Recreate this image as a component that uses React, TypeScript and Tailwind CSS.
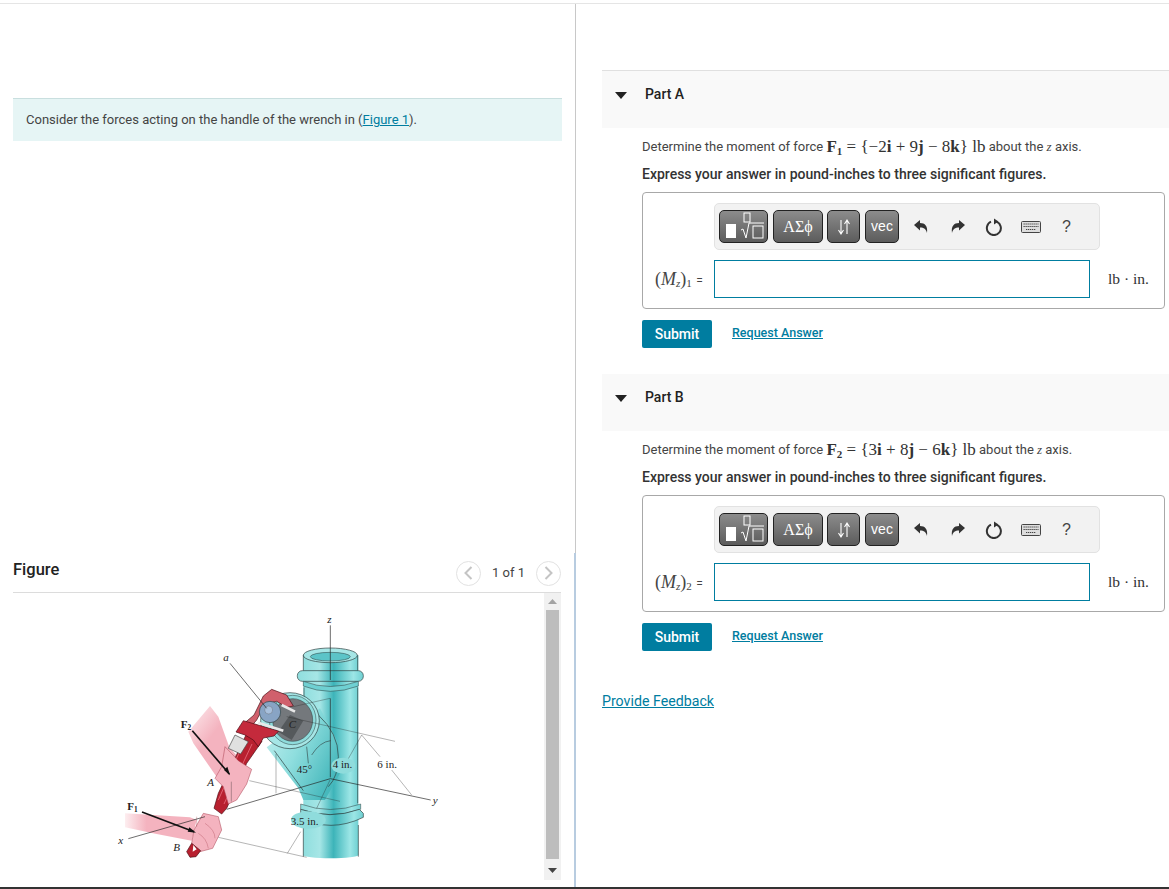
import React from 'react';

const serif = "font-['Liberation_Serif','DejaVu_Serif',serif]";

function WrenchFigure() {
  return (
    <svg width="350" height="270" viewBox="0 0 1050 810" className="block">
      <defs>
        <linearGradient id="pipe" x1="0" x2="1" y1="0" y2="0">
          <stop offset="0" stopColor="#8fdede" />
          <stop offset="0.3" stopColor="#a6e6e6" />
          <stop offset="0.55" stopColor="#3db4b9" />
          <stop offset="0.85" stopColor="#9ce6e6" />
          <stop offset="1" stopColor="#6fd0d2" />
        </linearGradient>
        <linearGradient id="branch" x1="0" x2="1" y1="0" y2="0.6">
          <stop offset="0" stopColor="#c6f0f0" />
          <stop offset="0.5" stopColor="#8fdede" />
          <stop offset="1" stopColor="#46b8bc" />
        </linearGradient>
        <linearGradient id="armTop" x1="1" x2="0" y1="1" y2="0">
          <stop offset="0.6" stopColor="#f4b3bf" />
          <stop offset="1" stopColor="#fdeef0" />
        </linearGradient>
        <linearGradient id="armLow" x1="1" x2="0" y1="0" y2="0">
          <stop offset="0.7" stopColor="#f4b3bf" />
          <stop offset="1" stopColor="#fdeef0" />
        </linearGradient>
      </defs>

      {/* main pipe */}
      <rect x="640" y="165" width="165" height="600" fill="url(#pipe)" />
      <ellipse cx="722" cy="765" rx="83" ry="10" fill="url(#pipe)" />
      <ellipse cx="721" cy="166" rx="81" ry="22" fill="#a6e6e6" stroke="#2c3c3c" strokeWidth="2" />
      <ellipse cx="721" cy="170" rx="60" ry="13" fill="#5cc4c8" stroke="#2c3c3c" strokeWidth="1.5" />
      <path d="M640 166V212M803 166V212M642 262V330M803 262V610M640 675V770M805 675V770" stroke="#2c3c3c" strokeWidth="2" fill="none" />
      <rect x="622" y="212" width="198" height="32" rx="15" fill="url(#pipe)" stroke="#2c3c3c" strokeWidth="2" />
      <path d="M640 244Q720 275 805 244V258Q720 290 640 258Z" fill="#6fd0d2" stroke="#2c3c3c" strokeWidth="1.5" />

      {/* branch */}
      <path d="M530 442L690 325L745 430L750 520L705 600L640 600L625 565Z" fill="url(#branch)" />
      <path d="M553 452L640 572M685 345Q745 400 745 470Q745 530 715 560" stroke="#2c3c3c" strokeWidth="2" fill="none" />
      <path d="M632 612Q720 645 812 612V628Q720 660 632 628Z" fill="url(#pipe)" stroke="#2c3c3c" strokeWidth="1.5" />
      <path d="M632 628V652Q720 700 820 652V640L808 628Q720 660 632 628Z" fill="url(#pipe)" stroke="#2c3c3c" strokeWidth="2" />
      <ellipse cx="600" cy="362" rx="88" ry="84" fill="#a6e6e6" stroke="#2c3c3c" strokeWidth="2" />
      <ellipse cx="608" cy="360" rx="70" ry="74" fill="#8fdcdc" stroke="#2c3c3c" strokeWidth="1.5" />
      <ellipse cx="608" cy="360" rx="60" ry="64" fill="#74787c" stroke="#2c3c3c" strokeWidth="1.5" />
      <path d="M600 345L640 362L605 420L565 395Z" fill="#55595c" />

      {/* arms */}
      <path d="M360 318L385 350L418 442L470 500L390 545L310 430L295 395Z" fill="url(#armTop)" />
      <path d="M105 640L300 652L320 660L305 722L200 702L105 682Z" fill="url(#armLow)" />

      {/* wrench */}
      <path d="M476 388L516 424L470 490L410 625L395 642L372 625L385 580Z" fill="#b8202f" stroke="#4a0c14" strokeWidth="2" />
      <path d="M462 425L385 600M486 432L402 612" stroke="#e06070" strokeWidth="3" />
      <path d="M492 345L520 288L545 268L590 285L610 318L590 322L560 304L525 312L500 360L476 388L460 372Z" fill="#d0606c" stroke="#4a0c14" strokeWidth="2" />
      <path d="M438 396L460 362L566 393L552 408L520 414L505 440L490 420L465 405Z" fill="#c42a3c" stroke="#4a0c14" strokeWidth="2" />
      <path d="M415 445L435 405L475 425L452 462Z" fill="#e0e0e0" stroke="#444" strokeWidth="2" />
      <circle cx="540" cy="336" r="32" fill="#88a4c4" stroke="#2c3c3c" strokeWidth="2" />
      <circle cx="536" cy="330" r="12" fill="#a8c0dc" stroke="#555" />
      <path d="M575 315L615 335M505 368L580 392" stroke="#e8e8e8" strokeWidth="8" />

      {/* hands */}
      <path d="M405 440L445 482L485 508L470 552L440 600L415 612L400 560L375 535L395 500Z" fill="#f4b3bf" stroke="#a84050" strokeWidth="1.5" />
      <path d="M340 640L385 650L395 690L368 745L330 755L305 730L312 690Z" fill="#f4b3bf" stroke="#a84050" strokeWidth="1.5" />
      <path d="M305 730L290 755L300 772L318 770L332 752Z" fill="#b8202f" stroke="#4a0c14" strokeWidth="2" />
      <path d="M310 735L308 755L320 748Z" fill="#fff" />
      <path d="M325 700Q350 715 355 745M345 670Q375 690 375 715M320 650V680" stroke="#a84050" fill="none" />

      {/* axes and dimensions */}
      <g stroke="#222" strokeWidth="2" fill="none">
        <path d="M721 76V240M721 295V532" />
        <path d="M721 536L1022 600" />
        <path d="M721 536L410 628M345 650L115 716" />
        <path d="M420 190L530 325" />
        <path d="M590 350L915 424M610 320L720 295" strokeWidth="1" />
        <path d="M478 542L750 604M385 712L650 772" strokeWidth="1" />
        <path d="M558 462V580M424 545V605" strokeWidth="1" />
        <path d="M815 405L870 470M905 510L965 585" strokeWidth="1" />
        <path d="M770 485L815 405" strokeWidth="1" />
        <path d="M592 760L632 695M680 625L720 540" strokeWidth="1" />
        <path d="M650 440L655 490M665 465Q690 425 722 422" strokeWidth="1.5" />
      </g>
      <path d="M307 392L418 522" stroke="#111" strokeWidth="5" />
      <path d="M420 526L402 510L412 500Z" fill="#111" />
      <path d="M156 636L312 695" stroke="#111" strokeWidth="5" />
      <path d="M318 698L293 695L298 682Z" fill="#111" />

      <ellipse cx="760" cy="497" rx="36" ry="24" fill="#8fdcdc" />
      <ellipse cx="655" cy="660" rx="52" ry="26" fill="#8fdcdc" />

      <g fontFamily="'Liberation Serif', serif" fontSize="33" fill="#222">
        <text x="712" y="70" fontStyle="italic">z</text>
        <text x="400" y="182" fontStyle="italic">a</text>
        <text x="272" y="384" fontWeight="700">F<tspan fontSize="22" dy="6">2</tspan></text>
        <text x="112" y="630" fontWeight="700">F<tspan fontSize="22" dy="6">1</tspan></text>
        <text x="352" y="558" fontStyle="italic">A</text>
        <text x="250" y="752" fontStyle="italic">B</text>
        <text x="85" y="732" fontStyle="italic">x</text>
        <text x="1028" y="612" fontStyle="italic">y</text>
        <text x="596" y="385" fontStyle="italic">C</text>
        <text x="620" y="518">45°</text>
        <text x="728" y="504">4 in.</text>
        <text x="862" y="504">6 in.</text>
        <text x="602" y="676">3.5 in.</text>
      </g>
    </svg>
  );
}

function Toolbar() {
  const btn = 'h-[33px] rounded-[5px] border border-[#222] bg-gradient-to-b from-[#8c8c8c] to-[#5c5c5c] text-white flex items-center justify-center';
  return (
    <div className="ml-[71px] w-[386px] h-[47px] rounded-[5px] border border-[#e2e2e2] bg-[#f2f2f2] flex items-center pl-[4px]">
      <div className={`${btn} w-[49px]`}>
        <svg width="44" height="30" viewBox="0 0 44 30">
          <rect x="4" y="12" width="10" height="14" fill="#fff" />
          <rect x="22" y="1" width="6" height="9" fill="none" stroke="#fff" />
          <path d="M19 18l2 -1l3 9l3 -15h15" fill="none" stroke="#fff" />
          <rect x="31" y="14" width="10" height="12" fill="none" stroke="#fff" />
        </svg>
      </div>
      <div className={`${btn} w-[50px] ml-[5px] ${serif} text-[16px]`}>ΑΣϕ</div>
      <div className={`${btn} w-[33px] ml-[4px]`}>
        <svg width="16" height="18" viewBox="0 0 16 18" fill="none" stroke="#fff" strokeWidth="1.1">
          <path d="M5 2V15M2.5 12L5 16L7.5 12" />
          <path d="M11 16V3M8.5 6L11 2L13.5 6" />
        </svg>
      </div>
      <div className={`${btn} w-[34px] ml-[5px] font-['Liberation_Sans',sans-serif] text-[14px]`}>vec</div>
      <svg width="16" height="16" viewBox="0 0 16 16" className="ml-[14px]" fill="#333">
        <path d="M1 6L7 1V4C12 4 15 7 14 14C13 10 11 8.5 7 8.5V11.5Z" />
      </svg>
      <svg width="16" height="16" viewBox="0 0 16 16" className="ml-[21px]" fill="#333">
        <path d="M15 6L9 1V4C4 4 1 7 2 14C3 10 5 8.5 9 8.5V11.5Z" />
      </svg>
      <svg width="18" height="18" viewBox="0 0 18 18" className="ml-[19px]" fill="none" stroke="#333" strokeWidth="2">
        <path d="M11.5 3.6A7 7 0 1 1 6 3.7" />
        <path d="M9 0.5L13.5 3.6L9 6.5Z" fill="#333" stroke="none" />
      </svg>
      <svg width="20" height="12" viewBox="0 0 20 12" className="ml-[18px]" fill="none" stroke="#444">
        <rect x="0.5" y="0.5" width="19" height="11" rx="1" fill="#ddd" />
        <path d="M2.5 3H17.5M2.5 5.5H17.5M5 8.5H15" strokeDasharray="1.3 0.7" />
      </svg>
      <span className="ml-[21px] text-[16px] text-[#444] font-['Liberation_Sans',sans-serif]">?</span>
    </div>
  );
}

function PartSection({ part, sub, force }: { part: string; sub: string; force: React.ReactNode }) {
  return (
    <div className="h-[303px]">
      <div className="h-[57px] bg-[#f9f9f9] flex items-start pt-[15px]">
        <svg width="12" height="7" viewBox="0 0 12 7" className="ml-[13px] mt-[6px]" fill="#222">
          <path d="M0 0H12L6 7Z" />
        </svg>
        <span className="ml-[18px] text-[14px] font-medium text-[#222] leading-[17px]">Part {part}</span>
      </div>
      <div className="pl-[40px] pt-[10px]">
        <div className="h-[18px] flex items-center text-[13px] text-[#444] whitespace-nowrap">
          Determine the moment of force&nbsp;
          <span className={`${serif} text-[17px] text-[#333]`}>{force}</span>
          &nbsp;about the&nbsp;<i className={serif}>z</i>&nbsp;axis.
        </div>
        <div className="h-[18px] mt-[9px] flex items-center text-[14px] font-medium text-[#333] whitespace-nowrap">
          Express your answer in pound-inches to three significant figures.
        </div>
        <div className="mt-[9px] w-[523px] h-[117px] rounded-[4px] border border-[#a8a8a8] pt-[10px]">
          <Toolbar />
          <div className="mt-[10px] flex items-center h-[38px]">
            <span className={`w-[71px] pl-[12px] text-[18px] text-[#444] whitespace-nowrap ${serif}`}>
              (<i>M</i><sub className="text-[11px] italic">z</sub>)<sub className="text-[11px]">{sub}</sub> <span className="font-['Roboto',sans-serif] text-[12px]">=</span>
            </span>
            <div className="w-[376px] h-[38px] border border-[#007da0] bg-white" />
            <span className={`ml-[18px] text-[15.5px] text-[#333] whitespace-nowrap ${serif}`}>lb · in.</span>
          </div>
        </div>
        <div className="mt-[11px] flex items-center">
          <button className="w-[70px] h-[28px] rounded-[2px] bg-[#007da0] text-white text-[14px] font-medium">Submit</button>
          <a className="ml-[20px] text-[12.5px] font-medium text-[#007da0] underline -mt-[2px]">Request Answer</a>
        </div>
      </div>
    </div>
  );
}

export default function App() {
  return (
    <div className="h-[889px] flex flex-col bg-white font-['Roboto',sans-serif] overflow-hidden">
      <div className="h-[3px]" />
      <div className="flex-1 flex min-h-0 border-t border-[#e5e5e5]">
        {/* Left pane */}
        <div className="w-[576px] flex flex-col shrink-0">
          <div className="h-[549px] border-r border-[#c8c8c8] pt-[94px] pl-[13px] pr-[13px]">
            <div className="h-[43px] bg-[#e6f5f5] border-t border-[#c9dfdf] flex items-center pl-[13px] text-[13px] text-[#444]">
              Consider the forces acting on the handle of the wrench in (<a className="text-[#007da0] underline">Figure 1</a>).
            </div>
          </div>
          <div className="flex-1 min-h-0 border-r-2 border-[#b8cce0] pl-[13px] pr-[13px] flex flex-col">
            <div className="h-[40px] border-b border-[#dcdcdc] flex items-center pt-[1px] shrink-0">
              <span className="text-[16.5px] font-medium text-[#222] -mt-[6px]">Figure</span>
              <div className="ml-auto flex items-center gap-[11px]">
                <span className="w-[25px] h-[25px] rounded-full border border-[#e2e2e2] flex items-center justify-center">
                  <svg width="9" height="14" viewBox="0 0 9 14" fill="none" stroke="#c4c4c4" strokeWidth="2"><path d="M7.5 1L1.5 7L7.5 13" /></svg>
                </span>
                <span className="text-[13px] text-[#444]">1 of 1</span>
                <span className="w-[25px] h-[25px] rounded-full border border-[#e2e2e2] flex items-center justify-center">
                  <svg width="9" height="14" viewBox="0 0 9 14" fill="none" stroke="#c4c4c4" strokeWidth="2"><path d="M1.5 1L7.5 7L1.5 13" /></svg>
                </span>
              </div>
            </div>
            <div className="h-[287px] flex shrink-0">
              <div className="flex-1 pl-[77px] pt-[7px]">
                <WrenchFigure />
              </div>
              <div className="w-[17px] bg-[#f1f1f1] flex flex-col items-center">
                <svg width="9" height="5" viewBox="0 0 9 5" className="mt-[6px]" fill="#a3a3a3"><path d="M0 5L4.5 0L9 5Z" /></svg>
                <div className="mt-[6px] w-[13px] h-[249px] bg-[#bdbdbd]" />
                <svg width="9" height="5" viewBox="0 0 9 5" className="mt-[9px]" fill="#444"><path d="M0 0L4.5 5L9 0Z" /></svg>
              </div>
            </div>
          </div>
        </div>

        {/* Right pane */}
        <div className="flex-1 min-w-0 pl-[26px] pt-[66px]">
          <div className="border-t border-[#e0e0e0]">
            <PartSection
              part="A"
              sub="1"
              force={<><b>F</b><sub className="text-[11px] font-bold">1</sub> = {'{'}−2<b>i</b> + 9<b>j</b> − 8<b>k</b>{'}'} lb</>}
            />
            <PartSection
              part="B"
              sub="2"
              force={<><b>F</b><sub className="text-[11px] font-bold">2</sub> = {'{'}3<b>i</b> + 8<b>j</b> − 6<b>k</b>{'}'} lb</>}
            />
          </div>
          <a className="block mt-[14px] text-[14.2px] text-[#007da0] underline">Provide Feedback</a>
        </div>
      </div>
      <div className="h-[2px] bg-[#333]" />
    </div>
  );
}
